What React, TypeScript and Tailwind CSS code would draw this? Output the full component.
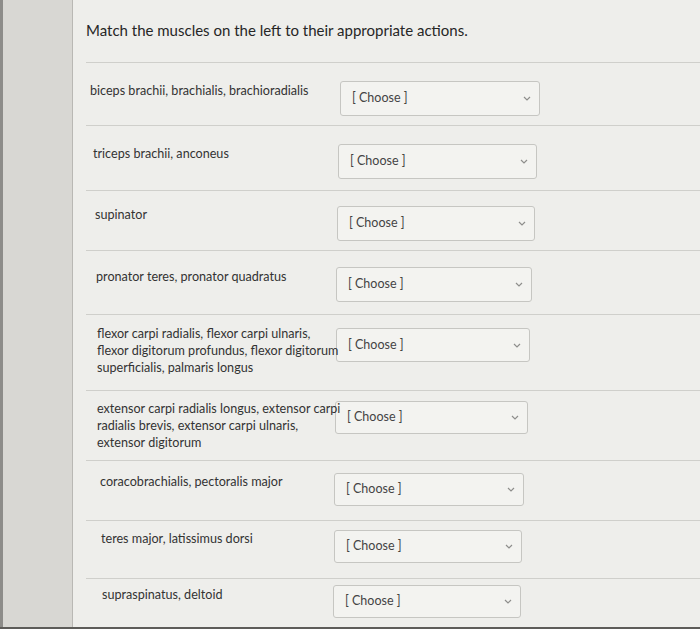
import React from "react";

type Row = {
  lines: string[];
  h: string;
  pt: string;
  pl: string;
  lw: string;
  sw: string;
  st: string;
  sh: string;
};

const rows: Row[] = [
  { lines: ["biceps brachii, brachialis, brachioradialis"], h: "h-[63px]", pt: "pt-[19px]", pl: "pl-[4px]", lw: "w-[254px]", sw: "w-[200px]", st: "mt-[18px]", sh: "h-[35px]" },
  { lines: ["triceps brachii, anconeus"], h: "h-[65px]", pt: "pt-[19px]", pl: "pl-[7px]", lw: "w-[252px]", sw: "w-[199px]", st: "mt-[18px]", sh: "h-[35px]" },
  { lines: ["supinator"], h: "h-[60px]", pt: "pt-[15px]", pl: "pl-[9px]", lw: "w-[251px]", sw: "w-[198px]", st: "mt-[15px]", sh: "h-[35px]" },
  { lines: ["pronator teres, pronator quadratus"], h: "h-[64px]", pt: "pt-[17px]", pl: "pl-[10px]", lw: "w-[250px]", sw: "w-[196px]", st: "mt-[16px]", sh: "h-[35px]" },
  { lines: ["flexor carpi radialis, flexor carpi ulnaris,", "flexor digitorum profundus, flexor digitorum", "superficialis, palmaris longus"], h: "h-[76px]", pt: "pt-[10px]", pl: "pl-[11px]", lw: "w-[250px]", sw: "w-[194px]", st: "mt-[13px]", sh: "h-[34px]" },
  { lines: ["extensor carpi radialis longus, extensor carpi", "radialis brevis, extensor carpi ulnaris,", "extensor digitorum"], h: "h-[70px]", pt: "pt-[9px]", pl: "pl-[11px]", lw: "w-[249px]", sw: "w-[193px]", st: "mt-[10px]", sh: "h-[33px]" },
  { lines: ["coracobrachialis, pectoralis major"], h: "h-[60px]", pt: "pt-[12px]", pl: "pl-[14px]", lw: "w-[248px]", sw: "w-[190px]", st: "mt-[12px]", sh: "h-[33px]" },
  { lines: ["teres major, latissimus dorsi"], h: "h-[58px]", pt: "pt-[9px]", pl: "pl-[15px]", lw: "w-[248px]", sw: "w-[188px]", st: "mt-[9px]", sh: "h-[33px]" },
  { lines: ["supraspinatus, deltoid"], h: "h-[49px]", pt: "pt-[7px]", pl: "pl-[16px]", lw: "w-[247px]", sw: "w-[188px]", st: "mt-[6px]", sh: "h-[33px]" },
];

function Chevron() {
  return (
    <svg width="8" height="5" viewBox="0 0 8 5" className="shrink-0">
      <path d="M1 1 L4 4 L7 1" fill="none" stroke="#8e8e8c" strokeWidth="1.2" />
    </svg>
  );
}

export default function App() {
  return (
    <div
      className="w-[700px] h-[629px] overflow-hidden flex flex-col bg-[#d7d6d2]"
      style={{ fontFamily: "Lato, 'Open Sans', sans-serif" }}
    >
      <div className="flex h-[627px]">
        <div className="w-[72px] shrink-0 flex">
          <div className="w-[3px] bg-[#8d8c89]" />
          <div className="flex-1 bg-[#d8d7d3]" />
        </div>
        <div className="flex-1 border-l border-[#b9b8b4] bg-[#eeeeeb] pl-[13px] flex flex-col">
          <div className="h-[62px] pt-[20px] text-[15px] leading-[20px] text-[#262626]">
            Match the muscles on the left to their appropriate actions.
          </div>
          {rows.map((r, i) => (
            <div key={i} className={`${r.h} border-t border-[#cfcfcb] flex items-start shrink-0`}>
              <div className={`${r.lw} ${r.pt} ${r.pl} relative z-10 shrink-0 text-[12.6px] leading-[17px] text-[#333333]`}>
                {r.lines.map((l, j) => (
                  <div key={j} className="whitespace-nowrap">
                    {l}
                  </div>
                ))}
              </div>
              <div
                className={`${r.sw} ${r.st} ${r.sh} shrink-0 border border-[#c6c6c2] rounded-[3px] bg-[#f3f3f0] flex items-center justify-between pl-[11px] pr-[8px] text-[12.5px] text-[#444444]`}
              >
                <span>[ Choose ]</span>
                <Chevron />
              </div>
            </div>
          ))}
        </div>
      </div>
      <div className="h-[2px] bg-[#5d5c59]" />
    </div>
  );
}
